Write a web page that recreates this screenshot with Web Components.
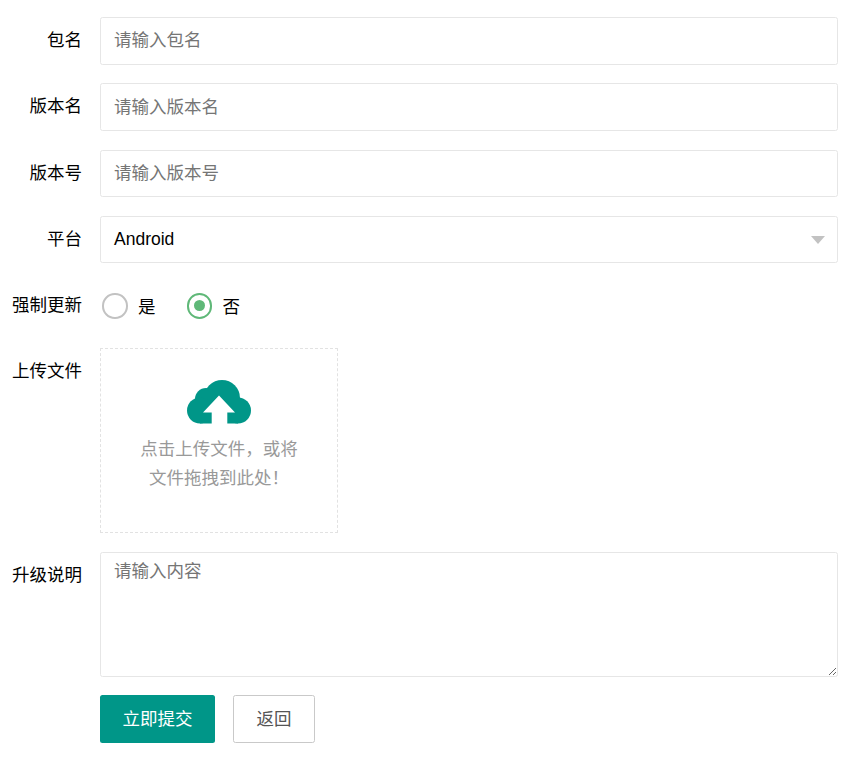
<!DOCTYPE html>
<html lang="zh-CN">
<head>
<meta charset="utf-8">
<title>上传版本</title>
<style>
    html, body { margin: 0; background: #fff; }
    body {
        font-family: "Liberation Sans", "Noto Sans CJK SC", sans-serif;
        font-size: 17.5px;
        color: #000;
    }
    version-form { padding: 17px 29px 0 0; }
</style>
</head>
<body>
<version-form>
    <form-item label="包名"><text-field placeholder="请输入包名"></text-field></form-item>
    <form-item label="版本名"><text-field placeholder="请输入版本名"></text-field></form-item>
    <form-item label="版本号"><text-field placeholder="请输入版本号"></text-field></form-item>
    <form-item label="平台"><select-field value="Android"></select-field></form-item>
    <form-item label="强制更新">
        <radio-group>
            <radio-option>是</radio-option>
            <radio-option checked>否</radio-option>
        </radio-group>
    </form-item>
    <form-item label="上传文件"><upload-box>点击上传文件，或将文件拖拽到此处！</upload-box></form-item>
    <form-item label="升级说明"><area-field placeholder="请输入内容"></area-field></form-item>
    <form-item>
        <form-actions>
            <form-button primary>立即提交</form-button>
            <form-button>返回</form-button>
        </form-actions>
    </form-item>
</version-form>

<script>
const define = (name, markup, setup) => {
    customElements.define(name, class extends HTMLElement {
        constructor() {
            super();
            this.attachShadow({ mode: 'open' });
        }

        connectedCallback() {
            this.shadowRoot.innerHTML = markup;
            if (setup) setup(this, this.shadowRoot);
        }
    });
};

define('version-form', `
    <style>:host { display: block; }</style>
    <slot></slot>
`);

define('form-item', `
    <style>
        :host { display: grid; grid-template-columns: 100px 1fr; margin-bottom: 18.75px; }
        .label { padding-right: 18px; text-align: right; line-height: 47px; white-space: nowrap; }
    </style>
    <div class="label"></div>
    <div><slot></slot></div>
`, (el, root) => {
    root.querySelector('.label').textContent = el.getAttribute('label') || '';
});

define('text-field', `
    <style>
        :host { display: block; }
        input {
            display: block;
            box-sizing: border-box;
            width: 100%;
            height: 47.5px;
            padding: 0 12.5px 0 13px;
            border: 1px solid #e6e6e6;
            border-radius: 2.5px;
            outline: none;
            background: #fff;
            color: #000;
            font: inherit;
        }
    </style>
    <input type="text">
`, (el, root) => {
    root.querySelector('input').placeholder = el.getAttribute('placeholder') || '';
});

define('select-field', `
    <style>
        :host { display: block; }
        .box {
            box-sizing: border-box;
            display: flex;
            align-items: center;
            justify-content: space-between;
            height: 47.5px;
            padding: 0 12px 0 13px;
            border: 1px solid #e6e6e6;
            border-radius: 2.5px;
        }
        .arrow {
            width: 0;
            height: 0;
            margin-top: 1px;
            border-style: solid;
            border-width: 8px 7.5px 0;
            border-color: #c2c2c2 transparent transparent;
        }
    </style>
    <div class="box"><span class="value"></span><span class="arrow"></span></div>
`, (el, root) => {
    root.querySelector('.value').textContent = el.getAttribute('value') || '';
});

define('radio-group', `
    <style>
        :host { display: flex; align-items: center; gap: 31px; height: 47.5px; padding-left: 2px; }
    </style>
    <slot></slot>
`);

define('radio-option', `
    <style>
        :host { display: inline-flex; align-items: center; gap: 10.5px; line-height: 25px; }
        .ring {
            box-sizing: border-box;
            display: flex;
            align-items: center;
            justify-content: center;
            width: 25.5px;
            height: 25.5px;
            border: 2px solid #c2c2c2;
            border-radius: 50%;
        }
        .text { padding-top: 3px; }
        :host([checked]) .ring { border-color: #5fb878; }
        :host([checked]) .ring::after {
            content: '';
            width: 11px;
            height: 11px;
            border-radius: 50%;
            background: #5fb878;
        }
    </style>
    <span class="ring"></span><span class="text"><slot></slot></span>
`);

define('upload-box', `
    <style>
        :host {
            box-sizing: border-box;
            display: block;
            width: 238px;
            height: 184.5px;
            padding: 30.5px 37px 0;
            border: 1px dashed #e2e2e2;
            color: #999;
            line-height: 29.5px;
            text-align: center;
        }
        svg { display: block; width: 64px; height: 44px; margin: 0 auto 11px; }
    </style>
    <svg viewBox="0 0 64 44" fill="#009688" aria-hidden="true">
        <circle cx="35" cy="18" r="18"/>
        <circle cx="19" cy="19" r="11"/>
        <circle cx="13" cy="30.5" r="13"/>
        <circle cx="51" cy="30.5" r="13"/>
        <rect x="13" y="20" width="38" height="23.5"/>
        <path fill="#fff" d="M32 15.5 48 32.5H40.3V44H24.7V32.5H16Z"/>
    </svg>
    <slot></slot>
`);

define('area-field', `
    <style>
        :host { display: block; }
        textarea {
            display: block;
            box-sizing: border-box;
            width: 100%;
            height: 125px;
            padding: 6px 12.5px 6px 13px;
            border: 1px solid #e6e6e6;
            border-radius: 2.5px;
            outline: none;
            color: #000;
            font: inherit;
            line-height: 25px;
        }
    </style>
    <textarea></textarea>
`, (el, root) => {
    root.querySelector('textarea').placeholder = el.getAttribute('placeholder') || '';
});

define('form-actions', `
    <style>:host { display: flex; gap: 18px; }</style>
    <slot></slot>
`);

define('form-button', `
    <style>
        :host {
            box-sizing: border-box;
            display: inline-flex;
            align-items: center;
            justify-content: center;
            height: 47.5px;
            padding: 0 22.5px 3px;
            border: 1px solid #c9c9c9;
            border-radius: 2.5px;
            background: #fff;
            color: #555;
        }
        :host([primary]) { border: 0; background: #009688; color: #fff; }
    </style>
    <slot></slot>
`);
</script>
</body>
</html>
